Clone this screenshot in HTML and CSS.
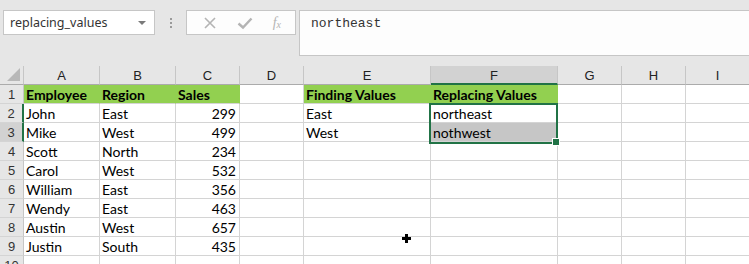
FILE: index.html
```html
<!DOCTYPE html>
<html lang="en">
<head>
  <meta charset="UTF-8" />
  <title>replacing_values</title>
  <link rel="stylesheet" href="styles.css">
</head>
<body>
  <div class="app">
    <div class="toolbar">
      <div class="namebox">
        <span class="name">replacing_values</span>
        <span class="caret"></span>
      </div>
      <div class="grip">
        <svg width="4" height="12" viewBox="0 0 4 12"><rect x="1" y="1" width="2" height="2" fill="#9a9a9a"/><rect x="1" y="5" width="2" height="2" fill="#9a9a9a"/><rect x="1" y="9" width="2" height="2" fill="#9a9a9a"/></svg>
      </div>
      <div class="fxbox">
        <svg width="14" height="14" viewBox="0 0 14 14"><path d="M2 2 L12 12 M12 2 L2 12" stroke="#b4b4b4" stroke-width="1.6" fill="none"/></svg>
        <svg width="16" height="14" viewBox="0 0 16 14"><path d="M1.5 7.5 L6 11.5 L14.5 2.5" stroke="#b4b4b4" stroke-width="2.4" fill="none"/></svg>
        <span class="fx">f<sub>x</sub></span>
      </div>
      <div class="formula">northeast</div>
    </div>

    <div class="sheet">
      <div class="corner"><span class="tri"></span></div>
      <div class="colhead">A</div>
      <div class="colhead">B</div>
      <div class="colhead">C</div>
      <div class="colhead">D</div>
      <div class="colhead">E</div>
      <div class="colhead active">F</div>
      <div class="colhead">G</div>
      <div class="colhead">H</div>
      <div class="colhead">I</div>

      <div class="rowhead">1</div>
      <div class="cell head">Employee</div>
      <div class="cell head">Region</div>
      <div class="cell head">Sales</div>
      <div class="cell"></div>
      <div class="cell head">Finding Values</div>
      <div class="cell head">Replacing Values</div>
      <div class="cell"></div><div class="cell"></div><div class="cell"></div>

      <div class="rowhead sel">2</div>
      <div class="cell">John</div>
      <div class="cell">East</div>
      <div class="cell num">299</div>
      <div class="cell"></div>
      <div class="cell">East</div>
      <div class="cell">northeast</div>
      <div class="cell"></div><div class="cell"></div><div class="cell"></div>

      <div class="rowhead sel dark">3</div>
      <div class="cell">Mike</div>
      <div class="cell">West</div>
      <div class="cell num">499</div>
      <div class="cell"></div>
      <div class="cell">West</div>
      <div class="cell shaded">nothwest</div>
      <div class="cell"></div><div class="cell"></div><div class="cell"></div>

      <div class="rowhead">4</div>
      <div class="cell">Scott</div>
      <div class="cell">North</div>
      <div class="cell num">234</div>
      <div class="cell"></div><div class="cell"></div><div class="cell"></div>
      <div class="cell"></div><div class="cell"></div><div class="cell"></div>

      <div class="rowhead">5</div>
      <div class="cell">Carol</div>
      <div class="cell">West</div>
      <div class="cell num">532</div>
      <div class="cell"></div><div class="cell"></div><div class="cell"></div>
      <div class="cell"></div><div class="cell"></div><div class="cell"></div>

      <div class="rowhead">6</div>
      <div class="cell">William</div>
      <div class="cell">East</div>
      <div class="cell num">356</div>
      <div class="cell"></div><div class="cell"></div><div class="cell"></div>
      <div class="cell"></div><div class="cell"></div><div class="cell"></div>

      <div class="rowhead">7</div>
      <div class="cell">Wendy</div>
      <div class="cell">East</div>
      <div class="cell num">463</div>
      <div class="cell"></div><div class="cell"></div><div class="cell"></div>
      <div class="cell"></div><div class="cell"></div><div class="cell"></div>

      <div class="rowhead">8</div>
      <div class="cell">Austin</div>
      <div class="cell">West</div>
      <div class="cell num">657</div>
      <div class="cell"></div><div class="cell"></div><div class="cell"></div>
      <div class="cell"></div><div class="cell"></div><div class="cell"></div>

      <div class="rowhead">9</div>
      <div class="cell">Justin</div>
      <div class="cell">South</div>
      <div class="cell num">435</div>
      <div class="cell"></div><div class="cell"></div><div class="cell"></div>
      <div class="cell"></div><div class="cell"></div><div class="cell"></div>

      <div class="rowhead">10</div>
      <div class="cell"></div><div class="cell"></div><div class="cell"></div>
      <div class="cell"></div><div class="cell"></div><div class="cell"></div>
      <div class="cell"></div><div class="cell"></div><div class="cell"></div>

      <div class="selection"><span class="handle"></span></div>
      <div class="cursor"></div>
    </div>
  </div>
</body>
</html>
```

FILE: styles.css
```css
body {
  margin: 0;
  background: #e6e6e6;
  font-family: 'Liberation Sans', Arial, sans-serif;
  overflow: hidden;
}

.app {
  width: 749px;
  height: 264px;
  overflow: hidden;
}

/* ---- formula bar ---- */
.toolbar {
  height: 66px;
  display: flex;
  align-items: flex-start;
  padding-top: 10px;
  box-sizing: border-box;
}

.namebox {
  margin-left: 3px;
  width: 152px;
  height: 25px;
  box-sizing: border-box;
  background: #fff;
  border: 1px solid #c6c6c6;
  display: flex;
  align-items: center;
  justify-content: space-between;
  padding: 0 8px 0 6px;
}

.name {
  font-family: 'Noto Sans', sans-serif;
  font-size: 12.5px;
  color: #333;
}

.caret {
  width: 0;
  height: 0;
  border-left: 4px solid transparent;
  border-right: 4px solid transparent;
  border-top: 4px solid #7a7a7a;
}

.grip {
  width: 31px;
  height: 25px;
  display: flex;
  align-items: center;
  justify-content: center;
}

.fxbox {
  width: 110px;
  height: 25px;
  box-sizing: border-box;
  background: #fdfdfd;
  border: 1px solid #c6c6c6;
  display: flex;
  align-items: center;
  justify-content: space-around;
  padding: 0 4px 0 6px;
}

.fx {
  font-family: 'Liberation Serif', serif;
  font-style: italic;
  font-size: 14px;
  color: #b4b4b4;
}

.fx sub {
  font-size: 10px;
  vertical-align: -1px;
}

.formula {
  margin-left: 3px;
  flex: 1;
  height: 46px;
  box-sizing: border-box;
  background: #fdfdfd;
  border: 1px solid #c6c6c6;
  border-right: none;
  font-family: 'Liberation Mono', monospace;
  font-size: 13px;
  color: #333;
  padding: 5px 0 0 11px;
}

/* ---- grid ---- */
.sheet {
  position: relative;
  display: grid;
  grid-template-columns: 24px 76px 76px 64px 64px 127px 127px 64px 64px 64px;
  grid-auto-rows: 19px;
  background: #fff;
}

.corner {
  background: #e6e6e6;
  border-right: 1px solid #c6c6c6;
  border-bottom: 1px solid #ababab;
  position: relative;
}

.tri {
  position: absolute;
  right: 3px;
  bottom: 3px;
  width: 0;
  height: 0;
  border-left: 13px solid transparent;
  border-bottom: 13px solid #b8b8b8;
}

.colhead {
  background: #e6e6e6;
  border-right: 1px solid #c6c6c6;
  border-bottom: 1px solid #ababab;
  font-family: 'Liberation Sans', sans-serif;
  font-size: 13px;
  color: #222;
  display: flex;
  align-items: center;
  justify-content: center;
  padding-top: 1px;
}

.colhead.active {
  background: #d2d2d2;
  border-bottom: 2px solid #217346;
}

.rowhead {
  background: #e6e6e6;
  border-right: 1px solid #c6c6c6;
  border-bottom: 1px solid #d4d4d4;
  font-size: 13px;
  color: #333;
  display: flex;
  align-items: center;
  justify-content: center;
}

.rowhead.sel {
  border-right: 2px solid #217346;
}

.rowhead.dark {
  background: #d2d2d2;
}

.cell {
  border-right: 1px solid #d4d4d4;
  border-bottom: 1px solid #d4d4d4;
  font-family: 'Lato', 'Liberation Sans', sans-serif;
  font-size: 14px;
  color: #000;
  padding: 0 3px 0 2px;
  display: flex;
  align-items: center;
  white-space: nowrap;
  overflow: hidden;
}

.cell.head {
  background: #92d050;
  border-right-color: #92d050;
  border-bottom-color: #d4d4d4;
  font-weight: bold;
}

.cell.num {
  justify-content: flex-end;
}

.cell.shaded {
  background: #c6c6c6;
}

.selection {
  position: absolute;
  left: 429px;
  top: 37px;
  width: 129px;
  height: 41px;
  box-sizing: border-box;
  border: 2px solid #217346;
}

.handle {
  position: absolute;
  right: -4px;
  bottom: -4px;
  width: 6px;
  height: 6px;
  background: #217346;
  border: 1px solid #fff;
}

.cursor {
  position: absolute;
  left: 402px;
  top: 168px;
  width: 9px;
  height: 9px;
  background:
    linear-gradient(#000, #000) center / 9px 3px no-repeat,
    linear-gradient(#000, #000) center / 3px 9px no-repeat;
}
```
